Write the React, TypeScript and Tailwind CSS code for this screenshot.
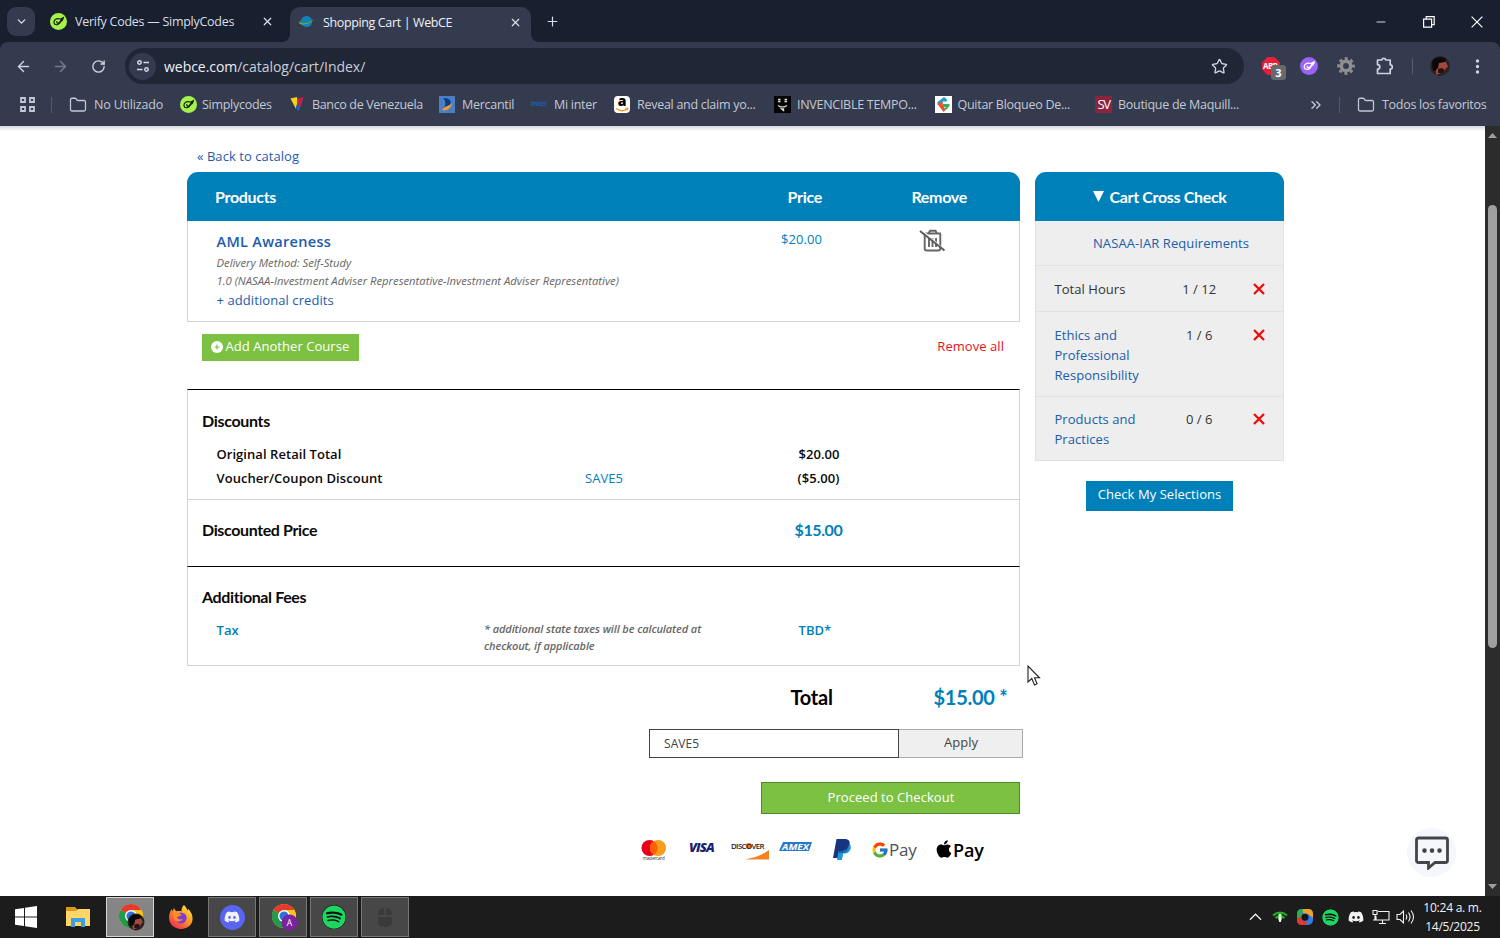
import React from 'react';
import { ArrowLeft, ArrowRight, ChevronDown, ChevronsRight, Folder, Minus, MoreVertical, Plus, RotateCw, Star, X } from 'lucide-react';
import { FaApple, FaDiscord, FaSpotify } from 'react-icons/fa';
import { FcGoogle } from 'react-icons/fc';

const SimplyCodesIcon = ({ color = '#a6f24c', stroke = '#16240c', size = 17 }: { color?: string; stroke?: string; size?: number }) => (
  <svg width={size} height={size} viewBox="0 0 18 18" className="shrink-0">
    <circle cx="9" cy="9" r="9" fill={color} />
    <path d="M10 6.300C6.500 5.300 3.800 7.800 4.200 10.200c.4 2.800 4.300 3 6 .6L13 6.500M7.200 9.200c-.2 2 2.500 1.800 3.300.2L12 7M10.800 8.800c1.500.3 3-1.300 3.400-4l-3 1.500" fill="none" stroke={stroke} strokeWidth="1.3" strokeLinecap="round" />
  </svg>
);

const PlanetIcon = () => (
  <svg width="17" height="16" viewBox="0 0 17 16" className="shrink-0">
    <circle cx="8.500" cy="7.500" r="5.600" fill="#1683b8" />
    <path d="M3 6.500C-.5 8.500 1 11 5.500 10.500c5-.6 10-3.300 10.700-5.500C14 7.500 9.500 9 6 9.300 3.500 9.500 1.500 9 3 6.500z" fill="#6fae3c" />
  </svg>
);

const ChromeIcon = ({ badge }: { badge: React.ReactNode }) => (
  <svg width="28" height="28" viewBox="0 0 28 28">
    <circle cx="13" cy="13" r="12" fill="#fbc116" />
    <path d="M13 13 2.600 7A12 12 0 0 1 23.400 7H13z" fill="#e33b2e" />
    <path d="M2.600 7A12 12 0 0 0 13 25l5.200-9-5.200-3z" fill="#229a4b" />
    <path d="M13 7h10.400A12 12 0 0 1 13 25l5.200-9z" fill="#fbc116" />
    <circle cx="13" cy="13" r="6" fill="#fff" />
    <circle cx="13" cy="13" r="4.600" fill="#2a73e0" />
    {badge}
  </svg>
);

const AvatarShape = ({ x, y, r }: { x: number; y: number; r: number }) => (
  <g transform={`translate(${x} ${y}) scale(${r / 10})`}>
    <circle r="10" fill="#2b2024" />
    <path d="M-1-3 5-5 7-2 8 1 6 2 5 5 1 7-4 9-4 3z" fill="#a04a3c" />
    <path d="M-8-3C-7-9 2-10 6-7L5-4-1-3-2 2-4 4-7 5z" fill="#0b080a" />
    <path d="M-2 3 2 2 5 4 3 7-2 7z" fill="#2a1214" />
  </g>
);

const FirefoxIcon = () => (
  <svg width="26" height="26" viewBox="0 0 26 26">
    <defs>
      <linearGradient id="fire" x1="0.85" y1="0.1" x2="0.2" y2="0.95">
        <stop offset="0" stopColor="#ffe03c" />
        <stop offset="0.45" stopColor="#ff9328" />
        <stop offset="1" stopColor="#ef2f4e" />
      </linearGradient>
    </defs>
    <path d="M16 1c2 2 3 4 3.500 5.500l1-1.500c3 3.500 4.500 7 4 11C23.800 21.500 19 25 13 25 6 25 1 20 1 13.500 1 10 2.300 7 3.800 5L4.500 7.500 6 4c.5 1.500 1.500 2.500 3 3.300 1.800-.4 3.500-.3 4.500.2C13.200 5 14.300 2.500 16 1z" fill="url(#fire)" />
    <circle cx="13" cy="14" r="5.600" fill="#7a3fd0" />
    <path d="M5.500 9.500c3-1.500 6-.8 8.500 1.500-2 1.500-4 1-5 2.500 1 2 3.500 2.500 6 1.500-1.500 3-6.500 3.500-8.500.5-1-1.500-1.300-4-1-6z" fill="#ff8a26" />
  </svg>
);

const TuneIcon = () => (
  <svg width="14" height="14" viewBox="0 0 14 14" fill="none" stroke="#d5d9e6" strokeWidth="1.500">
    <circle cx="3.500" cy="3.500" r="1.700" />
    <path d="M7.500 3.500H13M1 10.500h5.500" />
    <circle cx="10.500" cy="10.500" r="1.700" />
  </svg>
);

const GearIcon = () => (
  <svg width="18" height="18" viewBox="0 0 18 18" className="ml-[19px]" fill="none" stroke="#8f8f90">
    <circle cx="9" cy="9" r="7.400" strokeWidth="2.800" strokeDasharray="3.100 2.710" strokeDashoffset="1.550" />
    <circle cx="9" cy="9" r="4.700" strokeWidth="3.600" />
  </svg>
);

const PuzzleIcon = () => (
  <svg width="18" height="18" viewBox="0 0 18 18" className="ml-[21px]" fill="none" stroke="currentColor" strokeWidth="1.700" strokeLinejoin="round">
    <path d="M1.500 3h4.200a2.100 2.100 0 0 1 4.100 0h4.400v4.800a2.100 2.100 0 0 1 0 4.200v4.500H1.500v-4.300a2.300 2.300 0 0 0 0-4.600z" />
  </svg>
);

type Bookmark = { label: string; width: string; text: string; icon: React.ReactNode };

const bookmarks: Bookmark[] = [
  { label: 'No Utilizado', width: 'w-[111px]', text: 'pl-[25px] tracking-[-0.180px]', icon: <Folder size={18} strokeWidth={1.7} className="text-[#c6cad6]" /> },
  { label: 'Simplycodes', width: 'w-[109px]', text: 'pl-[22px]', icon: <SimplyCodesIcon /> },
  {
    label: 'Banco de Venezuela',
    width: 'w-[150px]',
    text: 'pl-[23px] tracking-[-0.350px]',
    icon: (
      <svg width="16" height="17" viewBox="0 0 16 17">
        <path d="M1.500 2.500 8 1l.5 6L7 13z" fill="#f4d40d" />
        <path d="M9 2.500l5.500-1.500L12 10 9 14z" fill="#c41f4e" />
        <path d="M7 11l1.700-5L11 13l-2 2.500z" fill="#1e5fb4" />
      </svg>
    ),
  },
  {
    label: 'Mercantil',
    width: 'w-[92px]',
    text: 'pl-[23px]',
    icon: (
      <svg width="16" height="17" viewBox="0 0 16 17">
        <path d="M0 0h16v17H0z" fill="#4a7fc4" />
        <path d="M4 2c7 0 9 3 7 7-2 1-4 1-6 3 2-4 2-7-1-10z" fill="#0b3c86" />
        <path d="M3 14c3 1 9 0 10-7-2 3-8 3-10 7z" fill="#f69a2c" />
      </svg>
    ),
  },
  { label: 'Mi inter', width: 'w-[83px]', text: 'pl-[23px]', icon: <span className="block w-4 text-center text-[7px] font-bold tracking-tight text-[#1c5fae]">inter</span> },
  {
    label: 'Reveal and claim yo...',
    width: 'w-[160px]',
    text: 'pl-[23px]',
    icon: (
      <span className="relative flex h-[17px] w-4 justify-center rounded-sm bg-white text-[14px] font-extrabold leading-[10px] text-black">
        a
        <svg width="16" height="6" viewBox="0 0 16 6" className="absolute bottom-0 left-0">
          <path d="M2 1.500q6 4.300 11.500.3M11.500 1.200l2.300.2-.6 2" fill="none" stroke="#f79a1c" strokeWidth="1.400" />
        </svg>
      </span>
    ),
  },
  {
    label: 'INVENCIBLE TEMPO...',
    width: 'w-[161px]',
    text: 'pl-[23px]',
    icon: (
      <svg width="17" height="17" viewBox="0 0 17 17">
        <path d="M0 0h17v17H0z" fill="#050505" />
        <path d="M4 3.500h2.500M4 5.500h2.500M10.500 3.500H13M10.500 5.500H13M4 9.500l2.500 1.300h4L13 9.500M7.500 13h2v1.500z" fill="none" stroke="#ddd" strokeWidth="1.300" />
      </svg>
    ),
  },
  {
    label: 'Quitar Bloqueo De...',
    width: 'w-[160px]',
    text: 'pl-[22.500px]',
    icon: (
      <svg width="17" height="17" viewBox="0 0 17 17">
        <path d="M0 0h17v17H0z" fill="#fff" />
        <path d="M9 1 2.500 6v3l6-4 2 1 2-2z" fill="#1c9fd4" />
        <path d="M2.500 8 8.500 16l2-2-3-6 1-3z" fill="#e65331" />
        <path d="M8 8h6.500v2L11 14l-2-1 2-2H8z" fill="#3bab5f" />
      </svg>
    ),
  },
  {
    label: 'Boutique de Maquill...',
    width: 'w-[160px]',
    text: 'pl-[23px]',
    icon: <span className="flex h-[17px] w-[17px] items-center justify-center bg-[#8c2440] text-[13px] tracking-[-1.500px] text-white">SV</span>,
  },
];

const TabBar = () => (
  <div className="flex h-[42px] items-start bg-[#181f2f] text-[12.500px] text-[#dadde6]">
    <button className="ml-[7px] mt-[7px] flex h-[29px] w-[28px] items-center justify-center rounded-[9px] bg-[#353b4e]">
      <ChevronDown size={13} strokeWidth={2.500} />
    </button>
    <div className="flex h-[43px] w-[255px] items-center pl-[15px]">
      <SimplyCodesIcon />
      <span className="ml-2 w-[186px] whitespace-nowrap pt-[2px] tracking-[-0.27px]">Verify Codes — SimplyCodes</span>
      <X size={13} strokeWidth={2.200} />
    </div>
    <div className="relative mt-[7px] flex h-[35px] w-[241px] items-center rounded-t-[10px] bg-[#353b4e] pb-[5px] pl-2">
      <svg width="8" height="8" className="absolute bottom-0 -left-2">
        <path d="M8 0v8H0A8 8 0 0 0 8 0z" fill="#353b4e" />
      </svg>
      <svg width="8" height="8" className="absolute -right-2 bottom-0">
        <path d="M0 0v8h8A8 8 0 0 1 0 0z" fill="#353b4e" />
      </svg>
      <PlanetIcon />
      <span className="ml-2 w-[186px] whitespace-nowrap pt-[2px] tracking-[-0.37px] text-[#eef0f6]">Shopping Cart | WebCE</span>
      <X size={13} strokeWidth={2.200} />
    </div>
    <Plus size={15} strokeWidth={1.900} className="ml-[14px] mt-[14px]" />
    <div className="ml-auto mr-[17.500px] mt-[15px] flex items-center text-white">
      <Minus size={14} strokeWidth={1.400} />
      <svg width="12" height="12" viewBox="0 0 12 12" className="ml-[35px]" fill="none" stroke="currentColor" strokeWidth="1.200">
        <path d="M.6 3.200h8v8h-8zM3.200 3V.7h8v8H9" />
      </svg>
      <svg width="12" height="12" viewBox="0 0 12 12" className="ml-[36px]" stroke="currentColor" strokeWidth="1.200">
        <path d="M.6.6l10.800 10.800M11.400.6.6 11.400" />
      </svg>
    </div>
  </div>
);

const Toolbar = () => (
  <div className="bg-[#181f2f]">
    <div className="flex h-[48px] items-center rounded-t-[8px] bg-[#353b4e] text-[#cfd3de]">
      <ArrowLeft size={17} strokeWidth={2} className="ml-[15px]" />
      <ArrowRight size={17} strokeWidth={2} className="ml-5 text-[#767c8c]" />
      <RotateCw size={15} strokeWidth={2.200} className="ml-[22px]" />
      <div className="ml-[19px] flex h-[36px] w-[1119px] items-center rounded-full bg-[#1f2635] pl-1">
        <span className="flex h-[27px] w-[27px] items-center justify-center rounded-full bg-[#353b4e]">
          <TuneIcon />
        </span>
        <span className="ml-[8px] text-[14px] tracking-[-0.04px] text-[#c9cdd8]">
          <span className="text-[#eef0f6]">webce.com</span>/catalog/cart/Index/
        </span>
        <Star size={17} strokeWidth={1.900} className="ml-auto mr-[16px]" />
      </div>
      <div className="relative ml-[18px] h-[18px] w-[18px]">
        <svg width="18" height="18" viewBox="0 0 18 18">
          <path d="M5.500 0h7L18 5.500v7L12.500 18h-7L0 12.500v-7z" fill="#e5203b" />
        </svg>
        <span className="absolute left-[1px] top-[3px] text-[8px] font-bold leading-[12px] tracking-[-0.6px] text-white">ABP</span>
        <span className="absolute left-[9px] top-[8px] flex h-[15px] w-[15px] items-center justify-center rounded-[3px] bg-[#666a6e] text-[11px] font-bold leading-none text-white">3</span>
      </div>
      <div className="ml-[20px]">
        <SimplyCodesIcon color="#9a63f6" stroke="#fff" size={18} />
      </div>
      <GearIcon />
      <PuzzleIcon />
      <span className="ml-[18px] h-[16px] w-px bg-[#565d70]" />
      <svg width="20" height="20" viewBox="0 0 20 20" className="ml-[17px]">
        <AvatarShape x={10} y={10} r={10} />
      </svg>
      <MoreVertical size={19} strokeWidth={2.300} className="ml-[18px]" />
    </div>
  </div>
);

const BookmarksBar = () => (
  <div className="flex h-[36px] items-center bg-[#353b4e] pb-[7px] text-[12.500px] tracking-[-0.28px] text-[#c3c8d4]">
    <svg width="15" height="15" viewBox="0 0 15 15" className="ml-[20px]" fill="none" stroke="currentColor" strokeWidth="1.800">
      <path d="M1 1h4v4H1zM10 1h4v4h-4zM1 10h4v4H1zM10 10h4v4h-4z" />
    </svg>
    <span className="ml-[16px] mr-[17px] h-[16px] w-px bg-[#525a6e]" />
    {bookmarks.map((b) => (
      <div key={b.label} className={`relative flex shrink-0 items-center ${b.width}`}>
        <span className="absolute left-0">{b.icon}</span>
        <span className={`whitespace-nowrap pt-px ${b.text}`}>{b.label}</span>
      </div>
    ))}
    <ChevronsRight size={16} strokeWidth={2} className="ml-[53px]" />
    <span className="ml-[15px] mr-[17px] h-[16px] w-px bg-[#525a6e]" />
    <Folder size={18} strokeWidth={1.700} />
    <span className="ml-[7px] whitespace-nowrap pt-px">Todos los favoritos</span>
  </div>
);

const headingFont = "font-['Lato',sans-serif] font-bold";

const Cart = () => (
  <div className="w-[833px]">
    <div className="flex h-[49px] items-center rounded-t-[11px] bg-[#0080b9] text-[16px] tracking-[-0.300px] text-white">
      <span className={`w-[572px] pl-[28px] ${headingFont}`}>Products</span>
      <span className={`w-[92px] pl-[10px] text-center ${headingFont}`}>Price</span>
      <span className={`w-[176px] pl-[13px] text-center ${headingFont}`}>Remove</span>
    </div>
    <div className="flex h-[101px] border border-t-0 border-[#d3d3d3] pl-[28.500px]">
      <div className="w-[530px] pt-[10px]">
        <div className="text-[14.500px] font-semibold leading-[22px] tracking-[0.300px] text-[#1c5cab]">AML Awareness</div>
        <div className="mt-px text-[11.250px] italic leading-[18px] tracking-[0.005px] text-[#666]">Delivery Method: Self-Study</div>
        <div className="text-[11.250px] italic leading-[18px] tracking-[0.005px] text-[#666]">1.0 (NASAA-Investment Adviser Representative-Investment Adviser Representative)</div>
        <div className="leading-5 tracking-[0.080px] text-[#1c5cab]">+ additional credits</div>
      </div>
      <div className="w-[110px] pl-[34.500px] pt-[8px] leading-5 text-[#0080b9]">$20.00</div>
      <svg width="28" height="24" viewBox="0 0 28 24" className="ml-[61px] mt-[8px]" fill="none" stroke="#666" strokeWidth="1.900">
        <path d="M6 4.500h17M10.500 4.500l1.500-2.700h5.500L19 4.500M6.700 5v14.500q0 2 2 2h11.600q2 0 2-2V5M11 9v9M14.500 9v9M18 9v9" />
        <path d="M3.500 1.200 27 21.700" stroke="#fff" strokeWidth="1.600" />
        <path d="M2 2 26.500 21.500" stroke="#5b5b5b" strokeWidth="2" />
      </svg>
    </div>
    <div className="flex h-[67px] items-start justify-between pl-[14.500px] pr-[16px] pt-[12px]">
      <button className="flex h-[27px] w-[157.500px] items-center whitespace-nowrap bg-[#7cc142] pb-px pl-[9px] text-white">
        <svg width="12" height="12" viewBox="0 0 12 12" className="mr-[3px]">
          <circle cx="6" cy="6" r="6" fill="#fff" />
          <path d="M6 3.500v5M3.500 6h5" stroke="#7cc142" strokeWidth="1.200" />
        </svg>
        Add Another Course
      </button>
      <span className="leading-6 text-[#e8121b]">Remove all</span>
    </div>

    <div className="h-[111px] border border-[#d3d3d3] border-t-black pl-[14px] font-semibold text-[#0a0a0a]">
      <div className={`pt-[19px] text-[16px] leading-6 tracking-[-0.320px] ${headingFont}`}>Discounts</div>
      <div className="mt-[8.500px] flex pl-[14.500px] leading-6">
        <span className="w-[582px]">Original Retail Total</span>
        <span>$20.00</span>
      </div>
      <div className="flex pl-[14.500px] leading-6">
        <span className="w-[368.500px]">Voucher/Coupon Discount</span>
        <span className="w-[212.500px] font-normal text-[#0080b9]">SAVE5</span>
        <span>($5.00)</span>
      </div>
    </div>
    <div className={`flex h-[66px] border-x border-[#d3d3d3] pl-[14px] pt-[18px] text-[16px] leading-6 tracking-[-0.380px] text-[#0a0a0a] ${headingFont}`}>
      <span className="w-[592.500px]">Discounted Price</span>
      <span className="text-[#0080b9]">$15.00</span>
    </div>
    <div className="h-[100px] border border-[#d3d3d3] border-t-black pl-[14px]">
      <div className={`pt-[18px] text-[16px] leading-6 tracking-[-0.380px] text-[#0a0a0a] ${headingFont}`}>Additional Fees</div>
      <div className="mt-[12px] flex pl-[14.500px] text-[13px] font-semibold text-[#0080b9]">
        <span className="w-[267.500px]">Tax</span>
        <span className="w-[314.500px] text-[11px] italic leading-[16.500px] tracking-[-0.100px] text-[#666]">
          * additional state taxes will be calculated at
          <br />
          checkout, if applicable
        </span>
        <span>TBD*</span>
      </div>
    </div>

    <div className={`flex h-[63px] pl-[603.500px] pt-[16px] text-[20px] leading-[30px] tracking-[-0.260px] ${headingFont}`}>
      <span className="w-[143px] text-black">Total</span>
      <span className="whitespace-nowrap text-[#0080b9]">$15.00 *</span>
    </div>
    <div className="ml-[462px] flex h-[29px] w-[374px] text-[#444]">
      <input readOnly value="SAVE5" className="w-[250px] border border-[#444] bg-white pl-[14px] text-[12px] outline-none" />
      <button className="w-[124px] border border-l-0 border-[#aaa] bg-[#efefef] pb-[2px] pl-px">Apply</button>
    </div>
    <button className="ml-[574px] mt-[24px] block h-[32px] w-[259px] border border-[#4d8a2b] bg-[#7cc142] pl-px text-white">Proceed to Checkout</button>

    <div className="ml-[453px] mt-[22px] flex h-[28px] items-center">
      <svg width="28" height="24" viewBox="0 0 28 24">
        <circle cx="9.500" cy="10" r="8" fill="#eb001b" />
        <circle cx="18" cy="10" r="8" fill="#f79e1b" />
        <path d="M13.700 3.200a8 8 0 0 1 0 13.600 8 8 0 0 1 0-13.600z" fill="#ff5f00" />
        <text x="13.700" y="21.500" textAnchor="middle" fontSize="4.500" fill="#333" textLength="22">mastercard</text>
      </svg>
      <span className="ml-[21px] w-[41px] pb-[6px] text-[13px] font-extrabold italic leading-5 tracking-[-0.900px] text-[#1a1f71]">VISA</span>
      <svg width="41" height="22" viewBox="0 0 41 22">
        <circle cx="18.700" cy="7" r="3" fill="#ee7623" />
        <text x="1" y="10" fontSize="7.800" fontWeight="600" fill="#222" letterSpacing="-0.600">DISCOVER</text>
        <path d="M15 20.500C25 18.500 33 15.500 39 11v9.500z" fill="#f58220" />
      </svg>
      <svg width="36" height="14" viewBox="0 0 36 14" className="mb-[6px] ml-[7px]">
        <path d="M5 2h29l-3 9H1z" fill="#2877c8" />
        <text x="4" y="10" fontSize="9.500" fontWeight="700" fontStyle="italic" fill="#fff" textLength="27" lengthAdjust="spacingAndGlyphs">AMEX</text>
      </svg>
      <svg width="20" height="24" viewBox="0 0 20 24" className="ml-[18px]">
        <path d="M4.500 1h8c4 0 6 2 5 6-1 4-4 6-8 6H7l-1.200 7H1z" fill="#17357f" />
        <path d="M17.300 5.500c2 2 1.900 4.500.9 6.500-1.500 3-4 3.500-7 3.500L9.900 22H5l1.500-9H9c4 0 7.500-2.500 8.300-7.500z" fill="#1b9bd8" />
        <path d="M17.200 6.500C16.500 11 13 13 9 13H6.500L6 16l1-1h4c4-.8 6-4 6.200-8.500z" fill="#1b3f8e" opacity=".6" />
      </svg>
      <FcGoogle size={18} className="ml-[19px]" />
      <span className="w-[29px] text-[17px] tracking-[-0.200px] text-[#4d5156]">Pay</span>
      <FaApple size={20} className="mb-[3px] ml-[16px] text-black" />
      <span className="-ml-px text-[18px] font-semibold tracking-[-0.100px] text-black">Pay</span>
    </div>
  </div>
);

const RedX = () => (
  <svg width="12" height="12" viewBox="0 0 12 12" className="mt-[4px]" stroke="#f00a0a" strokeWidth="2.300">
    <path d="M1 1l10 10M11 1 1 11" />
  </svg>
);

const checks = [
  { name: 'Total Hours', value: '1 / 12', row: 'h-[46px] pt-[13px]', color: 'text-[#333]' },
  { name: 'Ethics and Professional Responsibility', value: '1 / 6', row: 'h-[85px] pt-[13px]', color: 'text-[#1c5cab]' },
  { name: 'Products and Practices', value: '0 / 6', row: 'h-[64px] pt-[12px]', color: 'text-[#1c5cab]' },
];

const CrossCheck = () => (
  <div className="w-[249px]">
    <div className={`flex h-[49px] items-center justify-center rounded-t-[11px] bg-[#0080b9] pl-px text-[16px] tracking-[-0.330px] text-white ${headingFont}`}>
      <svg width="11" height="11" viewBox="0 0 11 11" className="mr-[5px]">
        <path d="M0 0h11L5.500 11z" fill="#fff" />
      </svg>
      Cart Cross Check
    </div>
    <div className="border-x border-b border-[#e2e2e2] bg-[#eee]">
      <div className="h-[44px] pl-[57px] pt-[12px] leading-5 tracking-[0.080px] text-[#1c5cab]">NASAA-IAR Requirements</div>
      {checks.map((c) => (
        <div key={c.name} className={`flex items-start border-t border-[#e2e2e2] pl-[18.500px] leading-5 ${c.row}`}>
          <span className={`w-[103px] pr-[5px] ${c.color}`}>{c.name}</span>
          <span className="w-[83.500px] text-center text-[#333]">{c.value}</span>
          <span className="pl-[12px]">
            <RedX />
          </span>
        </div>
      ))}
    </div>
    <button className="mx-auto mt-[20px] block h-[30px] w-[147px] bg-[#0080b9] pb-[2px] text-white">Check My Selections</button>
  </div>
);

const MouseCursor = () => (
  <svg width="14" height="22" viewBox="0 0 14 22" className="absolute left-[1027px] top-[539px]">
    <path d="M1 1v16l3.800-3.500L7.500 20l2.600-1.200-2.600-6H12.500z" fill="#fff" stroke="#222" strokeWidth="1.100" />
  </svg>
);

const ChatButton = () => (
  <button className="absolute left-[1407px] top-[702px] flex h-[49px] w-[49px] items-center justify-center rounded-full bg-[#f6f7fc]">
    <svg width="34" height="34" viewBox="0 0 34 34" fill="none" stroke="#444549" strokeWidth="2.800">
      <path d="M3.500 2h27q2 0 2 2v20.500q0 2-2 2H20l-6.500 5.500v-5.500h-10q-2 0-2-2V4q0-2 2-2z" />
      <path d="M9.500 14.600h0M17 14.600h0M24.500 14.600h0" strokeLinecap="round" strokeWidth="4.600" />
    </svg>
  </button>
);

const WindowsLogo = () => (
  <svg width="22" height="22" viewBox="0 0 22 22" fill="#fff">
    <path d="M0 3.200 9 2v8.500H0zM10 1.800 22 0v10.500H10zM0 11.500h9V20l-9-1.300zM10 11.500h12V22l-12-1.800z" />
  </svg>
);

const ExplorerIcon = () => (
  <svg width="24" height="22" viewBox="0 0 24 22">
    <path d="M0 1h9l2 2v3H0z" fill="#d99a1a" />
    <path d="M0 5h10l2-2h12v17H0z" fill="#fcd667" />
    <path d="M5 12h14v9h-4v-5H9v5H5z" fill="#3d9ee2" />
  </svg>
);

const Taskbar = () => (
  <div className="flex h-[42px] items-center bg-[#1c1c1c] text-[#f2f2f2]">
    <div className="flex w-[51px] justify-center">
      <WindowsLogo />
    </div>
    <div className="flex w-[54px] justify-center">
      <ExplorerIcon />
    </div>
    <div className="ml-px flex h-[40px] w-[48px] items-center justify-center border border-[#d5d5d5] bg-[#858585] pl-[3px]">
      <ChromeIcon badge={<AvatarShape x={18} y={19} r={8.5} />} />
    </div>
    <div className="flex w-[54px] justify-center">
      <FirefoxIcon />
    </div>
    <div className="flex h-[40px] w-[48px] items-center justify-center border border-[#777] bg-[#474747]">
      <span className="flex h-[25px] w-[25px] items-center justify-center rounded-full bg-[#5865f2]">
        <FaDiscord size={16} />
      </span>
    </div>
    <div className="ml-[3px] flex h-[40px] w-[48px] items-center justify-center border border-[#777] bg-[#474747] pl-[3px]">
      <ChromeIcon
        badge={
          <g>
            <circle cx="18.500" cy="19.500" r="8" fill="#7a22a0" />
            <text x="18.500" y="22.500" textAnchor="middle" fontSize="8.500" fill="#fff">A</text>
          </g>
        }
      />
    </div>
    <div className="ml-[3px] flex h-[40px] w-[48px] items-center justify-center border border-[#777] bg-[#474747]">
      <FaSpotify size={24} className="rounded-full bg-[#101010] text-[#1ed760]" />
    </div>
    <div className="ml-[3px] flex h-[40px] w-[48px] items-center justify-center border border-[#777] bg-[#474747]">
      <svg width="14" height="20" viewBox="0 0 14 20" fill="#3a3a3a">
        <path d="M0 8V6q0-3 3-4l3-.5V8zM8 8V1.500L11 2q3 1 3 4v2zM0 10h14v4q0 6-7 6t-7-6z" />
      </svg>
    </div>
    <div className="ml-auto flex items-center">
      <svg width="13" height="8" viewBox="0 0 14 8" fill="none" stroke="currentColor" strokeWidth="1.300">
        <path d="M1 7 7 1l6 6" />
      </svg>
      <svg width="16" height="14" viewBox="0 0 16 14" className="ml-[10px]">
        <path d="M1 5.500q7-6 14 0M3.500 8q4.500-4 9 0" fill="none" stroke="#22b622" strokeWidth="2" />
        <path d="M6.300 6.500h3.400v2.200L8.800 12H7.200L6.300 8.700z" fill="#e8ffe8" />
        <circle cx="8" cy="5" r="1.600" fill="#e8ffe8" />
      </svg>
      <svg width="16" height="16" viewBox="0 0 16 16" className="ml-[9px]">
        <rect width="16" height="16" rx="5" fill="#2d7df0" />
        <path d="M0 5q0-5 5-5h5L5 4 3.500 9 0 11z" fill="#2fae4e" />
        <path d="M6 0h5q5 0 5 5v4l-5-4-5-1z" fill="#f3a22b" />
        <path d="M0 9l4-1 2 4 5 1-2 3H5q-5 0-5-5z" fill="#e03b30" />
        <circle cx="8" cy="8.300" r="3.500" fill="#161616" />
      </svg>
      <FaSpotify size={17} className="ml-[9px] rounded-full bg-[#101010] text-[#1ed760]" />
      <FaDiscord size={16} className="ml-[9px]" />
      <svg width="18" height="16" viewBox="0 0 18 16" className="ml-[8px]" fill="none" stroke="currentColor" strokeWidth="1.100">
        <path d="M6 2.500h11v8.500H4V7M10.500 11v3M7 14.500h7M1 1.500h4v4H1zM3 5.500v5.500H1" />
      </svg>
      <svg width="19" height="16" viewBox="0 0 19 16" className="ml-[6px]" fill="none" stroke="currentColor" strokeWidth="1.100">
        <path d="M1 5.500h3L7.500 2v12L4 10.500H1zM10 5.500q1.500 2.500 0 5M12.500 3.500q3 4.500 0 9M15 1.500q5 6.500 0 13" />
      </svg>
      <div className="ml-[8px] mr-[17.500px] w-[60px] whitespace-nowrap text-center text-[12px] leading-[19px] tracking-[-0.240px]">
        <div>10:24 a. m.</div>
        <div>14/5/2025</div>
      </div>
    </div>
  </div>
);

export default function App() {
  return (
    <div className="flex h-[938px] w-[1500px] flex-col overflow-hidden bg-white font-['Open_Sans',sans-serif] text-[13px] tracking-[0.050px]">
      <TabBar />
      <Toolbar />
      <BookmarksBar />
      <div className="relative flex h-[770px]">
        <div className="w-[1485px]">
          <div className="h-[5px] bg-linear-to-b from-[#d6d4da] to-white" />
          <div className="pl-[197px] pt-[15px] leading-5 text-[#1c5cab]">« Back to catalog</div>
          <div className="mt-[6px] flex items-start gap-[15px] pl-[187px]">
            <Cart />
            <CrossCheck />
          </div>
        </div>
        <div className="flex w-[15px] flex-col items-center bg-[#2c2c2c] pt-[7px]">
          <svg width="9" height="5" viewBox="0 0 9 5">
            <path d="M4.500 0 9 5H0z" fill="#9f9f9f" />
          </svg>
          <div className="mt-[67px] h-[443px] w-[9px] rounded-full bg-[#9f9f9f]" />
          <svg width="9" height="5" viewBox="0 0 9 5" className="mb-[7px] mt-auto">
            <path d="M4.500 5 0 0h9z" fill="#9f9f9f" />
          </svg>
        </div>
        <MouseCursor />
        <ChatButton />
      </div>
      <Taskbar />
    </div>
  );
}
